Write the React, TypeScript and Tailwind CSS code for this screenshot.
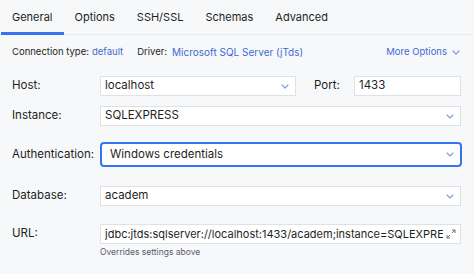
import React from 'react'

const font = { fontFamily: 'Inter, "Noto Sans", sans-serif' }

function Chevron({ className = '' }: { className?: string }) {
  return (
    <svg width="8" height="5" viewBox="0 0 8 5" className={className}>
      <path d="M1 1l3 3 3-3" fill="none" stroke="#7f9fd8" strokeWidth="1.1" strokeLinecap="round" strokeLinejoin="round" />
    </svg>
  )
}

function ExpandIcon() {
  return (
    <svg width="10" height="10" viewBox="0 0 10 10">
      <path d="M6 1h3v3M9 1L6 4M4 9H1V6M1 9l3-3" fill="none" stroke="#6c707e" strokeWidth="1" />
    </svg>
  )
}

const tabs = ['General', 'Options', 'SSH/SSL', 'Schemas', 'Advanced']

function Label({ children }: { children: React.ReactNode }) {
  return <div className="w-[88px] shrink-0 text-[11.5px] text-[#1e1f22]">{children}</div>
}

function Field({ value, combo, className = '' }: { value: string; combo?: boolean; className?: string }) {
  return (
    <div
      className={`flex h-[20px] min-w-0 items-center border border-[#dfe1e5] bg-white pl-[4px] pr-[6px] text-[11.5px] text-[#1e1f22] ${className}`}
    >
      <span className="flex-1 truncate">{value}</span>
      {combo && <Chevron />}
    </div>
  )
}

export default function App() {
  return (
    <div className="h-[274px] w-[474px] overflow-hidden bg-[#f7f8fa]" style={font}>
      <div className="flex h-[35px] border-b border-[#ebecf0]">
        {tabs.map((t, i) => (
          <div
            key={t}
            className={`relative flex items-center px-[11px] pt-[1px] text-[11px] text-[#1e1f22] ${i === 0 ? 'ml-[1px]' : ''}`}
          >
            {t}
            {i === 0 && <div className="absolute bottom-[-1px] left-0 right-0 h-[3px] bg-[#3574f0]" />}
          </div>
        ))}
      </div>

      <div className="flex h-[34px] items-center pl-[12px] pr-[14px] text-[9.5px]">
        <span className="text-[#1e1f22]">Connection type:</span>
        <span className="ml-[3px] text-[#3f6bd0]">default</span>
        <span className="ml-[14px] text-[#1e1f22]">Driver:</span>
        <span className="ml-[5px] text-[10px] text-[#3f6bd0]">Microsoft SQL Server (jTds)</span>
        <span className="ml-auto flex items-center gap-[5px] text-[#3f6bd0]">
          More Options <Chevron />
        </span>
      </div>

      <div className="flex flex-col pl-[12px] pr-[13px]">
        <div className="mt-[7px] flex items-center">
          <Label>Host:</Label>
          <Field value="localhost" combo className="w-[196px]" />
          <span className="ml-[18px] w-[40px] text-[11.5px] text-[#1e1f22]">Port:</span>
          <Field value="1433" className="flex-1" />
        </div>
        <div className="mt-[10px] flex items-center">
          <Label>Instance:</Label>
          <Field value="SQLEXPRESS" combo className="flex-1" />
        </div>
        <div className="mt-[16px] flex items-center">
          <Label>Authentication:</Label>
          <div className="-mr-[1px] flex h-[25px] min-w-0 flex-1 items-center rounded-[4px] border-2 border-[#3574f0] bg-white pl-[8px] pr-[6px] text-[11.5px] text-[#1e1f22]">
            <span className="flex-1">Windows credentials</span>
            <Chevron />
          </div>
        </div>
        <div className="mt-[19px] flex items-center">
          <Label>Database:</Label>
          <Field value="academ" combo className="flex-1" />
        </div>
        <div className="mt-[18px] flex items-center">
          <Label>URL:</Label>
          <div className="flex h-[20px] min-w-0 flex-1 items-center border border-[#dfe1e5] bg-white pl-[4px] pr-[4px] text-[11px] text-[#1e1f22]">
            <span className="min-w-0 flex-1 overflow-hidden whitespace-nowrap">jdbc:jtds:sqlserver://localhost:1433/academ;instance=SQLEXPRESS</span>
            <span className="ml-[3px] shrink-0"><ExpandIcon /></span>
          </div>
        </div>
        <div className="ml-[88px] mt-[2px] text-[8.5px] text-[#5a5d6b]">Overrides settings above</div>
      </div>
    </div>
  )
}
